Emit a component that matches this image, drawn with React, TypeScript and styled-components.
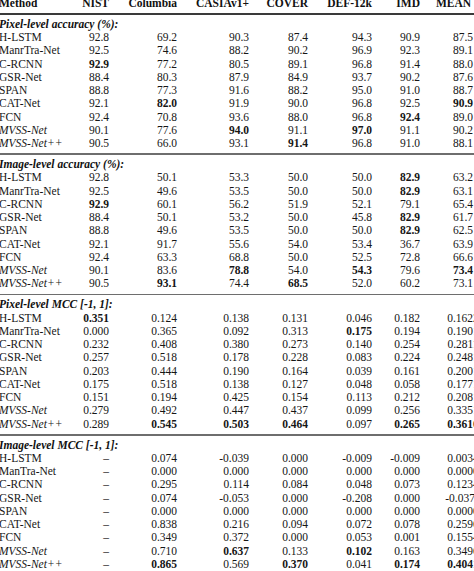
import React from "react";
import styled, { createGlobalStyle } from "styled-components";

const GlobalStyle = createGlobalStyle`
  html, body {
    margin: 0;
    padding: 0;
    background: #ffffff;
    overflow: hidden;
  }
`;

const COLS = "60px 50px 68px 72px 59px 64px 48px 86px";
const ROW_H = "13.25px";

const Table = styled.div`
  font-family: "Liberation Serif", "Times New Roman", serif;
  font-size: 11.5px;
  color: #161616;
  margin: -3px 0 0 -1px;
  width: 507px;
`;

const Row = styled.div`
  display: grid;
  grid-template-columns: ${COLS};
  height: ${ROW_H};
  line-height: ${ROW_H};
  white-space: nowrap;
`;

const NameCell = styled.div<{ $italic?: boolean }>`
  text-align: left;
  font-style: ${(p) => (p.$italic ? "italic" : "normal")};
`;

const Cell = styled.div<{ $bold?: boolean; $center?: boolean }>`
  text-align: ${(p) => (p.$center ? "center" : "right")};
  font-weight: ${(p) => (p.$bold ? "bold" : "normal")};
`;

const HeadCell = styled.div<{ $align: "left" | "right" | "mean" }>`
  font-weight: bold;
  color: #111;
  text-align: ${(p) => (p.$align === "right" ? "right" : "left")};
  padding-left: ${(p) => (p.$align === "mean" ? "16px" : "0")};
`;

const SectionTitle = styled.div`
  height: ${ROW_H};
  line-height: ${ROW_H};
  font-weight: bold;
  font-style: italic;
  white-space: nowrap;
  color: #111;
`;

const Rule = styled.div<{ $strong?: boolean }>`
  height: ${(p) => (p.$strong ? "1.5px" : "1.75px")};
  margin: 3px 0;
  background: ${(p) => (p.$strong ? "#3a3a3a" : "#6e6e6e")};
`;

type Section = { title: string; rows: [string, string[]][] };

const sections: Section[] = [
  {
    title: "Pixel-level accuracy (%):",
    rows: [
      ["H-LSTM", ["92.8", "69.2", "90.3", "87.4", "94.3", "90.9", "87.5"]],
      ["ManrTra-Net", ["92.5", "74.6", "88.2", "90.2", "96.9", "92.3", "89.1"]],
      ["C-RCNN", ["*92.9", "77.2", "80.5", "89.1", "96.8", "91.4", "88.0"]],
      ["GSR-Net", ["88.4", "80.3", "87.9", "84.9", "93.7", "90.2", "87.6"]],
      ["SPAN", ["88.8", "77.3", "91.6", "88.2", "95.0", "91.0", "88.7"]],
      ["CAT-Net", ["92.1", "*82.0", "91.9", "90.0", "96.8", "92.5", "*90.9"]],
      ["FCN", ["92.4", "70.8", "93.6", "88.0", "96.8", "*92.4", "89.0"]],
      ["MVSS-Net", ["90.1", "77.6", "*94.0", "91.1", "*97.0", "91.1", "90.2"]],
      ["MVSS-Net++", ["90.5", "66.0", "93.1", "*91.4", "96.8", "91.0", "88.1"]],
    ],
  },
  {
    title: "Image-level accuracy (%):",
    rows: [
      ["H-LSTM", ["92.8", "50.1", "53.3", "50.0", "50.0", "*82.9", "63.2"]],
      ["ManrTra-Net", ["92.5", "49.6", "53.5", "50.0", "50.0", "*82.9", "63.1"]],
      ["C-RCNN", ["*92.9", "60.1", "56.2", "51.9", "52.1", "79.1", "65.4"]],
      ["GSR-Net", ["88.4", "50.1", "53.2", "50.0", "45.8", "*82.9", "61.7"]],
      ["SPAN", ["88.8", "49.6", "53.5", "50.0", "50.0", "*82.9", "62.5"]],
      ["CAT-Net", ["92.1", "91.7", "55.6", "54.0", "53.4", "36.7", "63.9"]],
      ["FCN", ["92.4", "63.3", "68.8", "50.0", "52.5", "72.8", "66.6"]],
      ["MVSS-Net", ["90.1", "83.6", "*78.8", "54.0", "*54.3", "79.6", "*73.4"]],
      ["MVSS-Net++", ["90.5", "*93.1", "74.4", "*68.5", "52.0", "60.2", "73.1"]],
    ],
  },
  {
    title: "Pixel-level MCC [-1, 1]:",
    rows: [
      ["H-LSTM", ["*0.351", "0.124", "0.138", "0.131", "0.046", "0.182", "0.1622"]],
      ["ManrTra-Net", ["0.000", "0.365", "0.092", "0.313", "*0.175", "0.194", "0.1901"]],
      ["C-RCNN", ["0.232", "0.408", "0.380", "0.273", "0.140", "0.254", "0.2811"]],
      ["GSR-Net", ["0.257", "0.518", "0.178", "0.228", "0.083", "0.224", "0.2481"]],
      ["SPAN", ["0.203", "0.444", "0.190", "0.164", "0.039", "0.161", "0.2001"]],
      ["CAT-Net", ["0.175", "0.518", "0.138", "0.127", "0.048", "0.058", "0.1771"]],
      ["FCN", ["0.151", "0.194", "0.425", "0.154", "0.113", "0.212", "0.2081"]],
      ["MVSS-Net", ["0.279", "0.492", "0.447", "0.437", "0.099", "0.256", "0.3351"]],
      ["MVSS-Net++", ["0.289", "*0.545", "*0.503", "*0.464", "0.097", "*0.265", "*0.3610"]],
    ],
  },
  {
    title: "Image-level MCC [-1, 1]:",
    rows: [
      ["H-LSTM", ["–", "0.074", "-0.039", "0.000", "-0.009", "-0.009", "0.0034"]],
      ["ManTra-Net", ["–", "0.000", "0.000", "0.000", "0.000", "0.000", "0.0000"]],
      ["C-RCNN", ["–", "0.295", "0.114", "0.084", "0.048", "0.073", "0.1234"]],
      ["GSR-Net", ["–", "0.074", "-0.053", "0.000", "-0.208", "0.000", "-0.0371"]],
      ["SPAN", ["–", "0.000", "0.000", "0.000", "0.000", "0.000", "0.0000"]],
      ["CAT-Net", ["–", "0.838", "0.216", "0.094", "0.072", "0.078", "0.2596"]],
      ["FCN", ["–", "0.349", "0.372", "0.000", "0.053", "0.001", "0.1554"]],
      ["MVSS-Net", ["–", "0.710", "*0.637", "0.133", "*0.102", "0.163", "0.3496"]],
      ["MVSS-Net++", ["–", "*0.865", "0.569", "*0.370", "0.041", "*0.174", "*0.4041"]],
    ],
  },
];

const headers = ["NIST", "Columbia", "CASIAv1+", "COVER", "DEF-12k", "IMD"];

export default function App() {
  return (
    <>
      <GlobalStyle />
      <Table>
        <Row>
          <HeadCell $align="left">Method</HeadCell>
          {headers.map((h) => (
            <HeadCell key={h} $align="right">
              {h}
            </HeadCell>
          ))}
          <HeadCell $align="mean">MEAN</HeadCell>
        </Row>
        {sections.map((s, si) => (
          <React.Fragment key={s.title}>
            <Rule $strong={si === 0} />
            <SectionTitle>{s.title}</SectionTitle>
            {s.rows.map(([name, vals]) => (
              <Row key={name}>
                <NameCell $italic={name.startsWith("MVSS")}>{name}</NameCell>
                {vals.map((v, i) => {
                  const bold = v.startsWith("*");
                  return (
                    <Cell key={i} $bold={bold} $center={i === 6}>
                      {bold ? v.slice(1) : v}
                    </Cell>
                  );
                })}
              </Row>
            ))}
          </React.Fragment>
        ))}
      </Table>
    </>
  );
}
